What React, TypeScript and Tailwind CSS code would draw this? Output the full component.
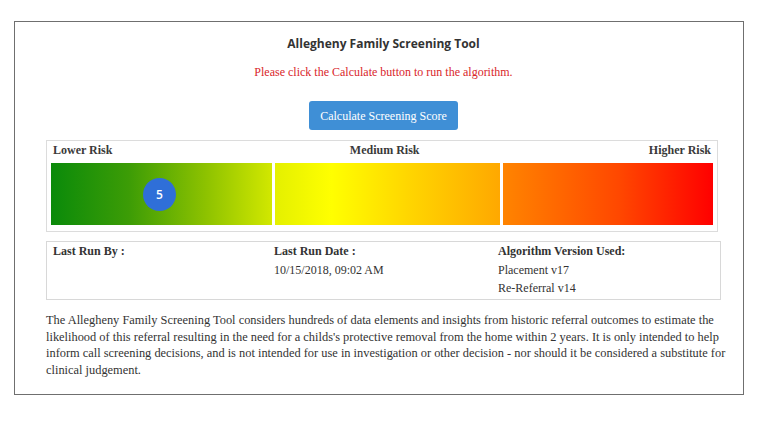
const serif = "font-['Liberation_Serif','Times_New_Roman',serif]";

function RiskScale({ score }: { score: number }) {
  return (
    <div className="border border-[#dcdcdc] px-[4px] pb-[6px]">
      <div className={`flex justify-between items-center h-[18px] px-[2px] text-[12px] font-bold text-[#3a3a3a] ${serif}`}>
        <span>Lower Risk</span>
        <span className="pl-[8px]">Medium Risk</span>
        <span>Higher Risk</span>
      </div>
      <div className="flex gap-[3px] h-[62px] mt-[4px]">
        <div className="relative w-[221px] bg-[linear-gradient(to_right,#0a8a0a_0%,#3c9c06_35%,#8dc200_70%,#d2e800_100%)]">
          <div className="absolute left-[92px] top-[15px] w-[33px] h-[33px] rounded-full bg-[#2f6fd8] flex items-center justify-center text-white text-[12px] font-semibold font-['Open_Sans',sans-serif]">
            {score}
          </div>
        </div>
        <div className="w-[225px] bg-[linear-gradient(to_right,#e4f000_0%,#ffff00_25%,#ffd500_60%,#ffa800_100%)]" />
        <div className="flex-1 bg-[linear-gradient(to_right,#ff8400_0%,#ff4800_55%,#ff0000_100%)]" />
      </div>
    </div>
  );
}

function RunInfo() {
  return (
    <div className={`border border-[#d8d8d8] mt-[9px] h-[59px] flex px-[6px] text-[12px] text-[#333] ${serif}`}>
      <div className="w-[221px]">
        <div className="font-bold leading-[18px]">Last Run By :</div>
      </div>
      <div className="w-[224px]">
        <div className="font-bold leading-[18px]">Last Run Date :</div>
        <div className="leading-[18px] mt-[1px]">10/15/2018, 09:02 AM</div>
      </div>
      <div>
        <div className="font-bold leading-[18px]">Algorithm Version Used:</div>
        <div className="leading-[18px] mt-[1px]">Placement v17</div>
        <div className="leading-[18px]">Re-Referral v14</div>
      </div>
    </div>
  );
}

export default function App() {
  return (
    <div className="w-[766px] h-[421px] bg-white pt-[21px] pl-[14px]">
      <div className="w-[730px] h-[374px] border border-[#6f6f6f] pl-[31px] pr-[22px]">
        <h1 className="text-center text-[12px] font-bold text-[#333] font-['Open_Sans',sans-serif] mt-[13px] leading-[18px]">
          Allegheny Family Screening Tool
        </h1>
        <p className={`text-center text-[12px] text-[#d9262b] mt-[11px] leading-[16px] ${serif}`}>
          Please click the Calculate button to run the algorithm.
        </p>
        <div className="flex justify-center mt-[21px]">
          <button className={`h-[29px] px-[11px] rounded-[3px] bg-[#3f8fd6] text-white text-[12px] ${serif}`}>
            Calculate Screening Score
          </button>
        </div>
        <div className="mt-[10px]">
          <div className="mr-[3px]">
            <RiskScale score={5} />
          </div>
          <RunInfo />
        </div>
        <p className={`mt-[12px] -mr-[10px] text-[12.4px] leading-[16.7px] text-[#333] ${serif}`}>
          The Allegheny Family Screening Tool considers hundreds of data elements and insights from historic referral outcomes to estimate the
          likelihood of this referral resulting in the need for a childs's protective removal from the home within 2 years. It is only intended to help
          inform call screening decisions, and is not intended for use in investigation or other decision - nor should it be considered a substitute for
          clinical judgement.
        </p>
      </div>
    </div>
  );
}
